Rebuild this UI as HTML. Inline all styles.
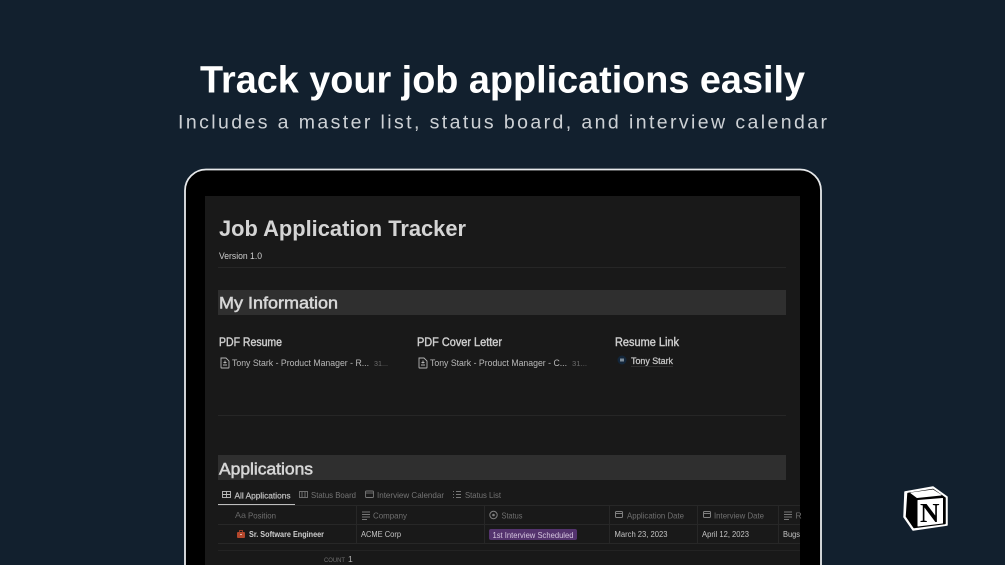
<!DOCTYPE html>
<html><head><meta charset="utf-8"><style>
html,body{margin:0;padding:0;background:#12202e;width:1005px;height:565px;overflow:hidden}
svg{display:block;position:absolute;left:0;top:0}
text{font-family:"Liberation Sans",sans-serif}
.b{filter:blur(.35px)}
</style></head><body>
<svg width="1005" height="565" viewBox="0 0 1005 565" xmlns="http://www.w3.org/2000/svg">
<rect width="1005" height="565" fill="#12202e"/>
<text x="200" y="92.500" font-size="38" font-weight="700" fill="#fff" textLength="605" lengthAdjust="spacingAndGlyphs">Track your job applications easily</text>
<text x="178" y="128.500" font-size="19.500" fill="#cdd1d5" textLength="649" lengthAdjust="spacing">Includes a master list, status board, and interview calendar</text>
<!-- frame -->
<path d="M185 565V190.500a21 21 0 0 1 21-21H800a21 21 0 0 1 21 21V565z" fill="#000"/>
<path d="M185 565V190.500a21 21 0 0 1 21-21H800a21 21 0 0 1 21 21V565" fill="none" stroke="#e6e8ea" stroke-width="1.800"/>
<rect x="205" y="196" width="595" height="369" fill="#191919"/>
<g class="b">
<text x="219" y="236" font-size="22.500" font-weight="700" fill="#d4d4d4" textLength="247" lengthAdjust="spacingAndGlyphs">Job Application Tracker</text>
<text x="219" y="259" font-size="9.500" fill="#cfcfcf" textLength="43" lengthAdjust="spacingAndGlyphs">Version 1.0</text>
<rect x="218" y="267" width="568" height="1" fill="#262626"/>
<rect x="218" y="290" width="568" height="25" fill="#2f2f2f"/>
<text x="219" y="308.500" font-size="17" stroke="#d6d6d6" stroke-width=".55" fill="#d6d6d6" textLength="119" lengthAdjust="spacingAndGlyphs">My Information</text>
<text x="219" y="346" font-size="11.500" stroke="#cfcfcf" stroke-width=".4" fill="#cfcfcf" textLength="63" lengthAdjust="spacingAndGlyphs">PDF Resume</text>
<text x="417" y="346" font-size="11.500" stroke="#cfcfcf" stroke-width=".4" fill="#cfcfcf" textLength="85" lengthAdjust="spacingAndGlyphs">PDF Cover Letter</text>
<text x="615" y="346" font-size="11.500" stroke="#cfcfcf" stroke-width=".4" fill="#cfcfcf" textLength="64" lengthAdjust="spacingAndGlyphs">Resume Link</text>
<g fill="none" stroke="#b5b5b5" stroke-width=".9">
<path d="M221 358h5l3 3v6.500q0 .5-.5.500h-7q-.5 0-.5-.5z"/><path d="M223 365h4M225 360.500v3M223.500 362.500h3"/>
<path d="M419 358h5l3 3v6.500q0 .5-.5.500h-7q-.5 0-.5-.5z"/><path d="M421 365h4M423 360.500v3M421.500 362.500h3"/>
</g>
<text x="232" y="366" font-size="9.200" fill="#b9b9b9" textLength="137" lengthAdjust="spacingAndGlyphs">Tony Stark - Product Manager - R...</text>
<text x="374" y="366" font-size="7" fill="#6a6a6a" textLength="14" lengthAdjust="spacingAndGlyphs">31...</text>
<text x="430" y="366" font-size="9.200" fill="#b9b9b9" textLength="137" lengthAdjust="spacingAndGlyphs">Tony Stark - Product Manager - C...</text>
<text x="572" y="366" font-size="7" fill="#6a6a6a" textLength="15" lengthAdjust="spacingAndGlyphs">31...</text>
<circle cx="622" cy="360" r="4.500" fill="#13263a"/><rect x="620" y="358.500" width="4" height="3" fill="#7d8c99"/>
<text x="631" y="364" font-size="9.200" stroke="#c8c8c8" stroke-width=".25" fill="#c8c8c8" textLength="42" lengthAdjust="spacingAndGlyphs">Tony Stark</text>
<rect x="631" y="366" width="42" height="1" fill="#2e2e2e"/>
<rect x="218" y="415" width="568" height="1" fill="#262626"/>
<rect x="218" y="455" width="568" height="25" fill="#2f2f2f"/>
<text x="219" y="474.500" font-size="17" stroke="#d6d6d6" stroke-width=".55" fill="#d6d6d6" textLength="94" lengthAdjust="spacingAndGlyphs">Applications</text>
<!-- tabs -->
<g fill="none" stroke="#a8a8a8" stroke-width=".9">
<rect x="222.500" y="491.500" width="8" height="6" stroke="#bdbdbd"/><path d="M222.500 494.500h8M226.500 491.500v6" stroke="#bdbdbd"/>
<rect x="299.500" y="491.500" width="8" height="6" stroke="#777"/><path d="M302 491.500v6M305 491.500v6" stroke="#777"/>
<rect x="365.500" y="491" width="8" height="6.500" rx="1" stroke="#777"/><path d="M365.500 493h8" stroke="#777"/>
<path d="M453 491.500h1M453 494.500h1M453 497.500h1M456 491.500h5M456 494.500h5M456 497.500h5" stroke="#777"/>
</g>
<text x="234.500" y="498.500" font-size="8.500" stroke="#c4c4c4" stroke-width=".2" fill="#c4c4c4" textLength="56" lengthAdjust="spacingAndGlyphs">All Applications</text>
<text x="311" y="498" font-size="8.500" fill="#747474" textLength="45" lengthAdjust="spacingAndGlyphs">Status Board</text>
<text x="377" y="498" font-size="8.500" fill="#747474" textLength="67" lengthAdjust="spacingAndGlyphs">Interview Calendar</text>
<text x="465" y="498" font-size="8.500" fill="#747474" textLength="36" lengthAdjust="spacingAndGlyphs">Status List</text>
<rect x="218" y="504" width="77" height="1.500" fill="#bdbdbd"/>
<!-- table -->
<rect x="218" y="505" width="582" height="1" fill="#272727"/>
<rect x="218" y="524" width="582" height="1" fill="#272727"/>
<rect x="218" y="543" width="582" height="1" fill="#272727"/>
<rect x="218" y="550" width="582" height="1" fill="#232323"/>
<g fill="#272727">
<rect x="356" y="505" width="1" height="38"/><rect x="484" y="505" width="1" height="38"/><rect x="609" y="505" width="1" height="38"/><rect x="697" y="505" width="1" height="38"/><rect x="778" y="505" width="1" height="38"/>
</g>
<text x="235" y="518" font-size="8.500" fill="#666" textLength="11" lengthAdjust="spacingAndGlyphs">Aa</text>
<text x="248" y="518.500" font-size="8.500" fill="#707070" textLength="28" lengthAdjust="spacingAndGlyphs">Position</text>
<path d="M362 512h8M362 514.500h8M362 517h8M362 519.500h5" stroke="#777" fill="none"/>
<text x="373" y="518.500" font-size="8.500" fill="#707070" textLength="34" lengthAdjust="spacingAndGlyphs">Company</text>
<circle cx="493.500" cy="515" r="3.700" fill="none" stroke="#808080"/><circle cx="493.500" cy="515" r="1.300" fill="#808080"/>
<text x="501.500" y="518.500" font-size="8.500" fill="#707070" textLength="21" lengthAdjust="spacingAndGlyphs">Status</text>
<rect x="615.500" y="511.500" width="7" height="6" rx="1" fill="none" stroke="#808080"/><path d="M615.500 513.500h7" stroke="#808080"/>
<text x="627" y="518.500" font-size="8.500" fill="#707070" textLength="57" lengthAdjust="spacingAndGlyphs">Application Date</text>
<rect x="703.500" y="511.500" width="7" height="6" rx="1" fill="none" stroke="#808080"/><path d="M703.500 513.500h7" stroke="#808080"/>
<text x="714" y="518.500" font-size="8.500" fill="#707070" textLength="50" lengthAdjust="spacingAndGlyphs">Interview Date</text>
<path d="M784 512h8M784 514.500h8M784 517h8M784 519.500h5" stroke="#777" fill="none"/>
<text x="795.500" y="518.500" font-size="8.500" fill="#707070">R</text>
<!-- row -->
<rect x="237" y="532" width="8" height="6" rx="1" fill="#b3472c"/><rect x="239.500" y="530.500" width="3" height="2" fill="none" stroke="#b3472c" stroke-width=".8"/><rect x="240" y="534" width="2" height="1" fill="#e0b8a8"/>
<text x="249" y="537" font-size="8.500" font-weight="700" fill="#cfcfcf" textLength="75" lengthAdjust="spacingAndGlyphs">Sr. Software Engineer</text>
<text x="361" y="537" font-size="8.700" fill="#c4c4c4" textLength="40" lengthAdjust="spacingAndGlyphs">ACME Corp</text>
<rect x="489" y="529" width="88" height="11" rx="2" fill="#54336e"/>
<text x="492.500" y="538" font-size="8.700" fill="#d4c4de" textLength="81" lengthAdjust="spacingAndGlyphs">1st Interview Scheduled</text>
<text x="614.500" y="537" font-size="8.700" fill="#c4c4c4" textLength="53" lengthAdjust="spacingAndGlyphs">March 23, 2023</text>
<text x="702" y="537" font-size="8.700" fill="#c4c4c4" textLength="47" lengthAdjust="spacingAndGlyphs">April 12, 2023</text>
<text x="783" y="537" font-size="8.700" fill="#c4c4c4" textLength="17" lengthAdjust="spacingAndGlyphs">Bugs</text>
<text x="324" y="562" font-size="6.200" fill="#707070" textLength="21" lengthAdjust="spacingAndGlyphs">COUNT</text>
<text x="348" y="562" font-size="8.500" fill="#b0b0b0">1</text>
</g>
<!-- Notion logo -->
<g transform="translate(904 486)">
<path d="M1 6 29 1 43 11V39L9 44 0 31z" fill="#fff" stroke="#fff" stroke-width="1.500" stroke-linejoin="round"/>
<path d="M4 7.500 29 3.500 41 12V37.500L10 41.500 2.500 30.500z" fill="#000" stroke="#000" stroke-width="1.500" stroke-linejoin="round"/>
<path d="M7 7 29 4 37 9 13 11.500z" fill="#fff" stroke="#fff" stroke-linejoin="round"/>
<path d="M14 14.500 38.500 12.500V37L14 40z" fill="#fff" stroke="#fff" stroke-linejoin="round"/>
<text x="16" y="36" font-size="27" font-weight="700" fill="#000" style="font-family:'Liberation Serif',serif">N</text>
</g>
</svg>
</body></html>
